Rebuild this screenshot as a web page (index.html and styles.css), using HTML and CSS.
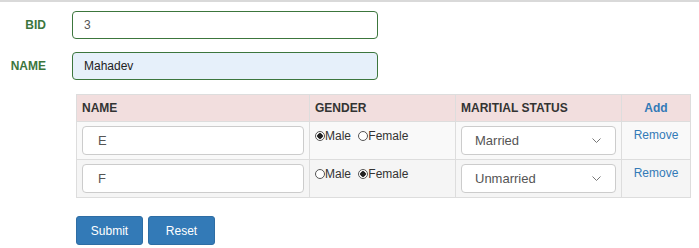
FILE: index.html
```html
<!DOCTYPE html>
<html>
    <head lang="en">
        <meta charset="UTF-8">
        <title>Bid form</title>
        <link rel="stylesheet" href="styles.css">
    </head>
    <body>
        <form id="bidForm">
            <div class="form-row">
                <label class="form-label">BID</label>
                <input class="form-input" type="text" value="3">
            </div>
            <div class="form-row last">
                <label class="form-label">NAME</label>
                <input class="form-input filled" type="text" value="Mahadev">
            </div>

            <table class="grid">
                <thead>
                    <tr>
                        <th class="col-name">NAME</th>
                        <th class="col-gender">GENDER</th>
                        <th class="col-status">MARITIAL STATUS</th>
                        <th class="col-action"><a href="#">Add</a></th>
                    </tr>
                </thead>
                <tbody>
                    <tr>
                        <td><input class="cell-input" type="text" value="E"></td>
                        <td class="gender">
                            <label><input type="radio" name="g1" checked>Male</label>
                            <label><input type="radio" name="g1">Female</label>
                        </td>
                        <td>
                            <div class="select">
                                <span>Married</span>
                                <svg width="9" height="6" viewBox="0 0 9 6"><path d="M0.5 0.5 L4.5 4.5 L8.5 0.5" fill="none" stroke="#777" stroke-width="1"/></svg>
                            </div>
                        </td>
                        <td class="action"><a href="#">Remove</a></td>
                    </tr>
                    <tr class="even">
                        <td><input class="cell-input" type="text" value="F"></td>
                        <td class="gender">
                            <label><input type="radio" name="g2">Male</label>
                            <label><input type="radio" name="g2" checked>Female</label>
                        </td>
                        <td>
                            <div class="select">
                                <span>Unmarried</span>
                                <svg width="9" height="6" viewBox="0 0 9 6"><path d="M0.5 0.5 L4.5 4.5 L8.5 0.5" fill="none" stroke="#777" stroke-width="1"/></svg>
                            </div>
                        </td>
                        <td class="action"><a href="#">Remove</a></td>
                    </tr>
                </tbody>
            </table>

            <div class="buttons">
                <button type="button" class="btn">Submit</button>
                <button type="button" class="btn">Reset</button>
            </div>
        </form>
    </body>
</html>
```

FILE: styles.css
```css
*{
    margin:0;
    padding:0;
    box-sizing:border-box;
}
body{
    font-family:"Liberation Sans", Arial, sans-serif;
    font-size:12px;
    color:#333;
    background:#fff;
    border-top:2px solid #d9d9d9;
}
a{
    color:#337ab7;
    text-decoration:none;
}
#bidForm{
    padding-top:9px;
}
.form-row{
    display:flex;
    align-items:center;
    margin-bottom:13px;
}
.form-row.last{
    margin-bottom:14px;
}
.form-label{
    width:46px;
    margin-right:26px;
    text-align:right;
    font-weight:bold;
    color:#3c763d;
}
.form-input{
    width:306px;
    height:28px;
    padding:0 11px;
    border:1px solid #3c763d;
    border-radius:4px;
    font-family:inherit;
    font-size:12px;
    color:#555;
    background:#fff;
    outline:none;
}
.form-input.filled{
    background:#e6f0fa;
    color:#222;
}
.grid{
    margin-left:76px;
    width:615px;
    border-collapse:collapse;
    border:1px solid #ddd;
}
.grid th{
    height:27px;
    padding:0 5px;
    background:#f2dede;
    text-align:left;
    font-weight:bold;
    border:1px solid #ddd;
    border-top:none;
}
.grid th.col-action{
    text-align:center;
}
.col-name{ width:232px; }
.col-gender{ width:146px; }
.col-status{ width:166px; }
.grid td{
    height:38px;
    padding:4px 5px;
    vertical-align:top;
    background:#f9f9f9;
    border:1px solid #ddd;
}
.grid tr.even td{
    background:#f5f5f5;
}
.cell-input{
    width:222px;
    height:29px;
    padding:0 15px;
    border:1px solid #ccc;
    border-radius:4px;
    font-family:inherit;
    font-size:13px;
    color:#555;
    background:#fff;
}
.gender{
    padding-top:7px !important;
}
.gender label{
    margin-right:4px;
}
.gender input{
    appearance:none;
    -webkit-appearance:none;
    width:10px;
    height:10px;
    border:1px solid #555;
    border-radius:50%;
    vertical-align:-1px;
    background:#fff;
}
.gender input:checked{
    background:radial-gradient(circle, #222 0, #222 2.5px, #fff 3px);
}
.select{
    display:flex;
    align-items:center;
    justify-content:space-between;
    width:155px;
    height:29px;
    padding:0 14px 0 13px;
    border:1px solid #ccc;
    border-radius:4px;
    background:#fff;
    color:#555;
    font-size:13px;
}
.action{
    text-align:center;
    padding-top:6px !important;
}
.buttons{
    display:flex;
    gap:5px;
    margin:18px 0 0 76px;
}
.btn{
    width:67px;
    height:29px;
    border:1px solid #2e6da4;
    border-radius:3px;
    background:#337ab7;
    color:#fff;
    font-family:inherit;
    font-size:12px;
}
```
